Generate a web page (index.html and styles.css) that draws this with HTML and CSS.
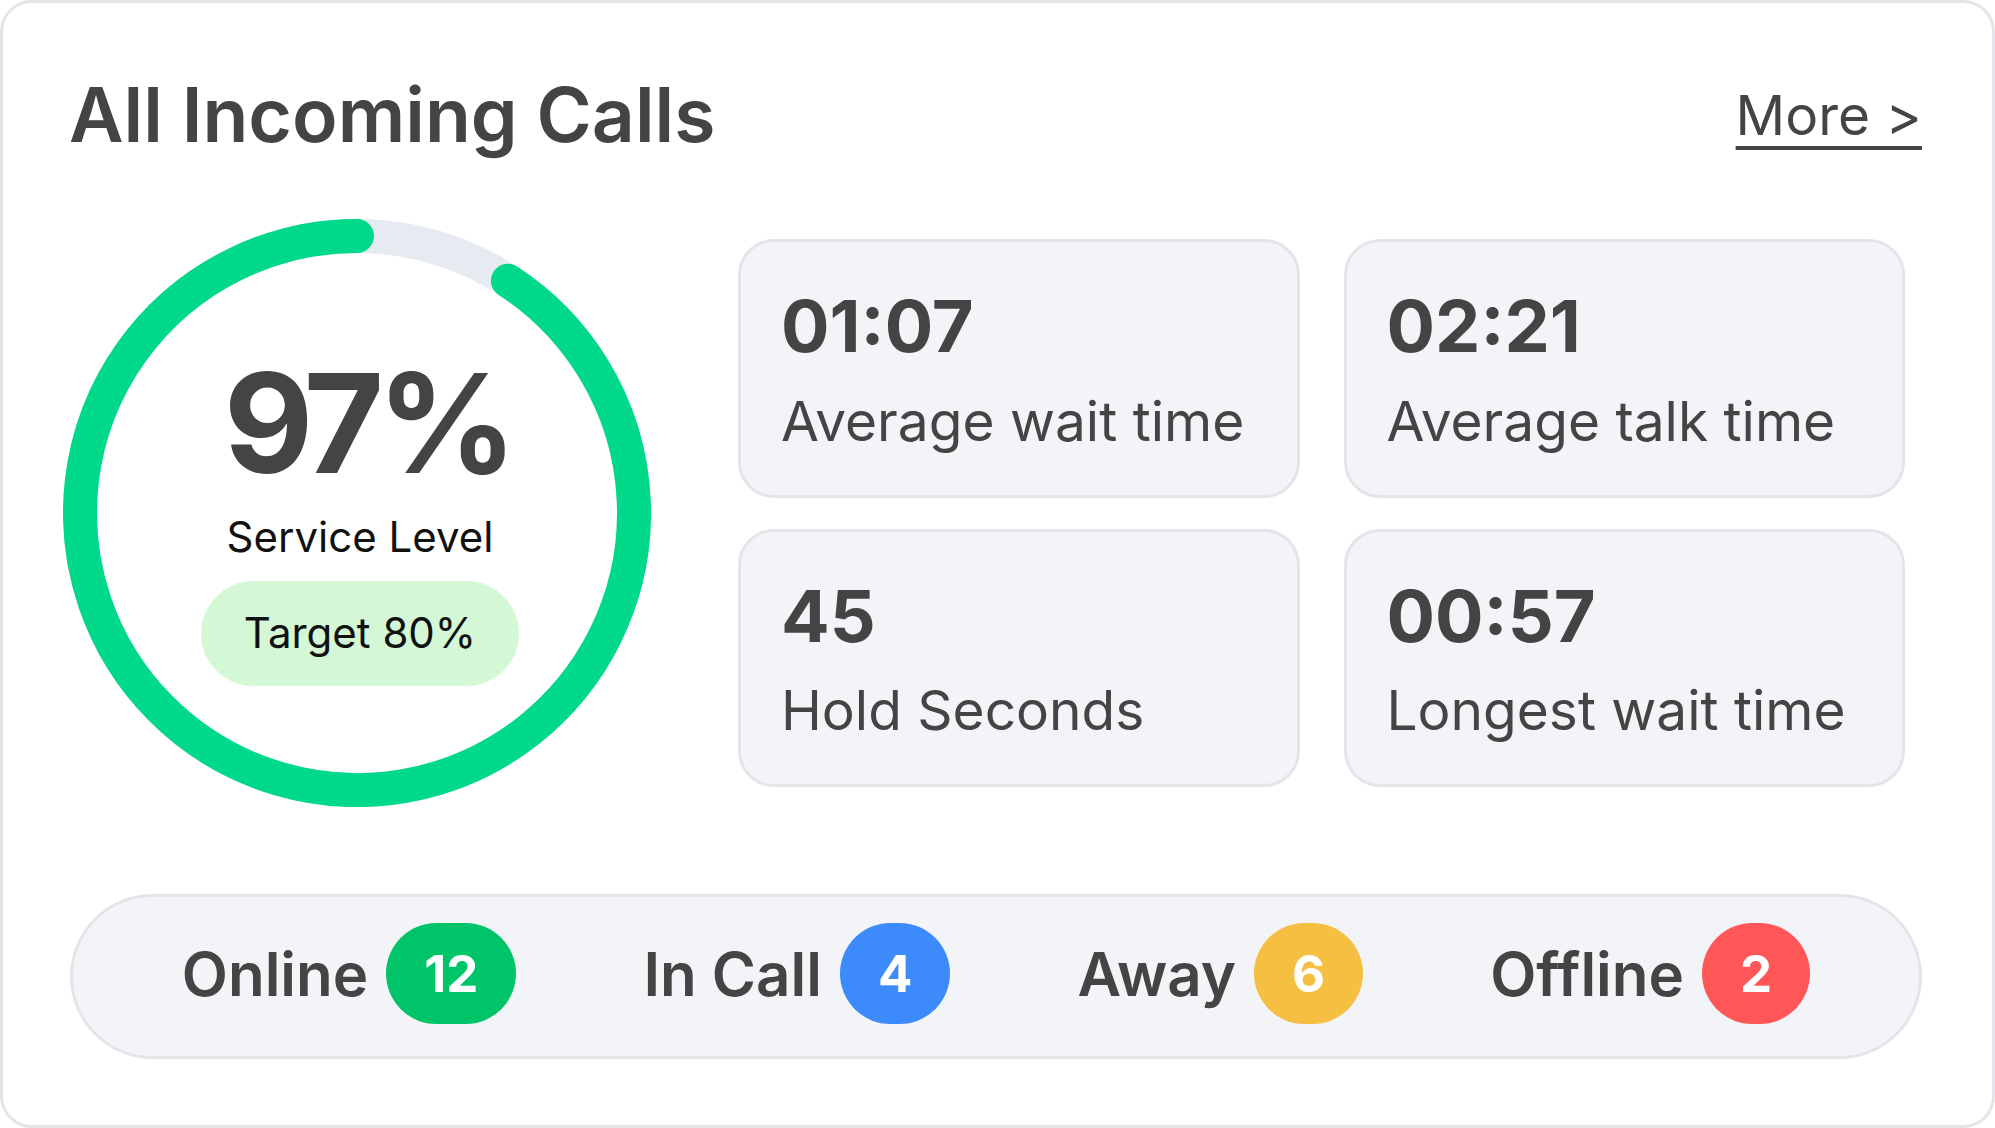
FILE: index.html
```html
<!DOCTYPE html>
<html lang="en">
  <head>
    <meta charset="UTF-8" />
    <meta name="viewport" content="width=device-width, initial-scale=1.0" />
    <title>All Incoming Calls</title>
    <link rel="stylesheet" href="styles.css">
  </head>
  <body>
    <div class="panel">
      <div class="panel-header">
        <h1>All Incoming Calls</h1>
        <a class="more-link" href="#">More &gt;</a>
      </div>

      <div class="overview">
        <div class="service-ring">
          <svg width="588" height="588" viewBox="0 0 588 588">
            <circle cx="294" cy="294" r="277" fill="none" stroke="#e7eaf1" stroke-width="34" />
            <path d="M 444.9 61.7 A 277 277 0 1 1 294 17" fill="none" stroke="#00d98a" stroke-width="34" stroke-linecap="round" />
          </svg>
          <div class="ring-label">
            <div class="ring-value">97%</div>
            <div class="ring-caption">Service Level</div>
            <div class="ring-target">Target 80%</div>
          </div>
        </div>

        <div class="stats">
          <div class="stat-card">
            <div class="stat-value">01:07</div>
            <div class="stat-label">Average wait time</div>
          </div>
          <div class="stat-card">
            <div class="stat-value">02:21</div>
            <div class="stat-label">Average talk time</div>
          </div>
          <div class="stat-card">
            <div class="stat-value">45</div>
            <div class="stat-label">Hold Seconds</div>
          </div>
          <div class="stat-card">
            <div class="stat-value">00:57</div>
            <div class="stat-label">Longest wait time</div>
          </div>
        </div>
      </div>

      <div class="agent-status">
        <div class="status-item">
          <span>Online</span>
          <span class="badge badge-online">12</span>
        </div>
        <div class="status-item">
          <span>In Call</span>
          <span class="badge badge-call">4</span>
        </div>
        <div class="status-item">
          <span>Away</span>
          <span class="badge badge-away">6</span>
        </div>
        <div class="status-item">
          <span>Offline</span>
          <span class="badge badge-offline">2</span>
        </div>
      </div>
    </div>
  </body>
</html>
```

FILE: styles.css
```css
body {
  margin: 0;
  font-family: Inter, "Noto Sans", sans-serif;
  background: #ffffff;
  color: #444444;
}
.panel {
  box-sizing: border-box;
  height: 100vh;
  padding: 67px 70px 0 60px;
  border: 3px solid #e3e5ea;
  border-radius: 32px;
  background: #ffffff;
}
.panel-header {
  display: flex;
  justify-content: space-between;
  align-items: center;
  padding-left: 6px;
}
.panel-header h1 {
  margin: 0;
  font-size: 75px;
  font-weight: 600;
  line-height: 1.2;
  color: #444444;
}
.more-link {
  font-size: 55px;
  line-height: 1.2;
  color: #444444;
  text-decoration: underline;
  text-decoration-thickness: 4px;
  text-underline-offset: 11px;
}
.overview {
  display: flex;
  align-items: center;
  margin-top: 59px;
}
.service-ring {
  display: grid;
  width: 588px;
  height: 588px;
  flex-shrink: 0;
}
.service-ring svg,
.ring-label {
  grid-area: 1 / 1;
}
.ring-label {
  display: flex;
  flex-direction: column;
  align-items: center;
  justify-content: center;
  padding-left: 6px;
}
.ring-value {
  padding-left: 14px;
  font-size: 138px;
  font-weight: 700;
  line-height: 1.2;
  letter-spacing: -7px;
  color: #444444;
  margin-bottom: 6px;
}
.ring-caption {
  font-size: 42px;
  line-height: 1.2;
  color: #111111;
  margin-bottom: 19px;
}
.ring-target {
  padding: 27px 43px;
  font-size: 42px;
  line-height: 1.2;
  color: #111111;
  background: #d4f7d6;
  border-radius: 53px;
}
.stats {
  display: grid;
  grid-template-columns: 1fr 1fr;
  gap: 31px 44px;
  width: 1167px;
  margin-left: 87px;
}
.stat-card {
  padding: 41px 40px;
  background: #f3f4f8;
  border: 3px solid #e3e5ea;
  border-radius: 36px;
}
.stat-value {
  font-size: 72px;
  font-weight: 700;
  line-height: 1.2;
  color: #444444;
  margin-bottom: 18px;
}
.stat-label {
  font-size: 55px;
  line-height: 1.2;
  color: #444444;
}
.agent-status {
  box-sizing: border-box;
  display: flex;
  justify-content: center;
  align-items: center;
  gap: 127px;
  height: 165px;
  margin: 87px 0 0 7px;
  padding-bottom: 6px;
  background: #f3f4f8;
  border: 3px solid #e3e5ea;
  border-radius: 83px;
}
.status-item {
  display: flex;
  align-items: center;
  gap: 18px;
  font-size: 60px;
  font-weight: 600;
  color: #444444;
}
.badge {
  box-sizing: border-box;
  min-width: 104px;
  height: 101px;
  padding: 0 38px;
  border-radius: 51px;
  font-size: 51px;
  font-weight: 700;
  line-height: 101px;
  text-align: center;
  color: #ffffff;
}
.badge-online {
  background: #00c468;
}
.badge-call {
  background: #3d8bfa;
}
.badge-away {
  background: #f5bf42;
}
.badge-offline {
  background: #ff5757;
}
```
